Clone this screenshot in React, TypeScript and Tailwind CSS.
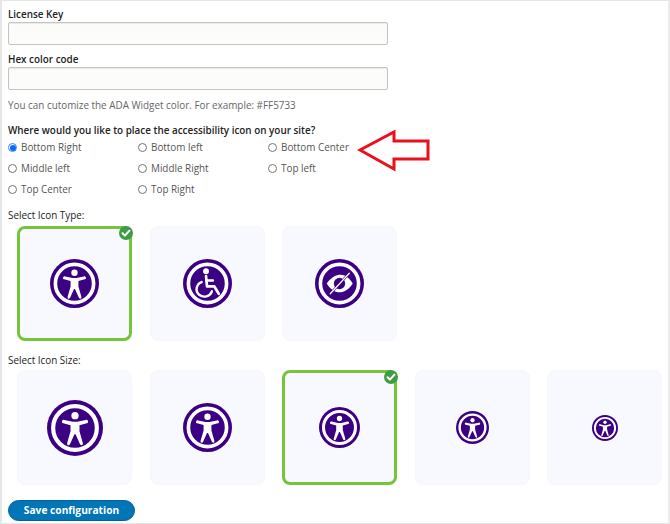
const PURPLE = "#3c0082";

function Ring({ size, children }: { size: number; children: React.ReactNode }) {
  return (
    <svg width={size} height={size} viewBox="0 0 100 100">
      <circle cx="50" cy="50" r="50" fill={PURPLE} />
      <circle cx="50" cy="50" r="39" fill={PURPLE} stroke="#fff" strokeWidth="7.500" />
      {children}
    </svg>
  );
}

function BodyIcon({ size }: { size: number }) {
  return (
    <Ring size={size}>
      <circle cx="50" cy="28" r="6.500" fill="#fff" />
      <path
        d="M27 37 C26 39.500 27 41 29 41.500 L42 45 L42 56 L36 77 C35 81 39 82.500 41 79 L49 61 L51 61 L59 79 C61 82.500 65 81 64 77 L58 56 L58 45 L71 41.500 C73 41 74 39.500 73 37 C72 35 71 35 69 35.500 L54 39 L46 39 L31 35.500 C29 35 28 35 27 37 Z"
        fill="#fff"
      />
    </Ring>
  );
}

function WheelchairIcon({ size }: { size: number }) {
  return (
    <Ring size={size}>
      <circle cx="47" cy="25" r="6" fill="#fff" />
      <path
        d="M47 35 L49 56 L64 56 L73 71"
        fill="none"
        stroke="#fff"
        strokeWidth="5.500"
        strokeLinecap="round"
        strokeLinejoin="round"
      />
      <path d="M48 44 L61 44" stroke="#fff" strokeWidth="5" strokeLinecap="round" />
      <path
        d="M38 47 C27 51 24 66 33 73 C42 80 55 77 59 66"
        fill="none"
        stroke="#fff"
        strokeWidth="5"
        strokeLinecap="round"
      />
    </Ring>
  );
}

function EyeOffIcon({ size }: { size: number }) {
  return (
    <Ring size={size}>
      <path
        d="M24 50 C33 37 43 32 52 32 C62 32 71 39 77 50 C70 61 60 68 50 68 C40 68 31 61 24 50 Z"
        fill="#fff"
      />
      <circle cx="50" cy="50" r="11.500" fill={PURPLE} />
      <path d="M31 71 L70 29" stroke={PURPLE} strokeWidth="5" />
      <path d="M31 71 L70 29" stroke="#fff" strokeWidth="2.500" strokeLinecap="round" />
    </Ring>
  );
}

function Tile({ selected, children }: { selected?: boolean; children: React.ReactNode }) {
  return (
    <div
      className={
        selected
          ? "relative flex h-[115px] w-[115px] items-center justify-center rounded-[8px] border-[3px] border-[#74c53c] bg-[#f8f9ff]"
          : "relative flex h-[115px] w-[115px] items-center justify-center rounded-[8px] border border-[#f6f7fc] bg-[#f8f9ff]"
      }
    >
      {children}
      {selected && (
        <svg className="absolute right-[-4px] top-[-3px]" width="14" height="14" viewBox="0 0 15 15">
          <circle cx="7.500" cy="7.500" r="7.500" fill="#3f9c43" />
          <path
            d="M3.800 7.800 L6.300 10.300 L11.200 5"
            fill="none"
            stroke="#fff"
            strokeWidth="2.200"
            strokeLinecap="round"
            strokeLinejoin="round"
          />
        </svg>
      )}
    </div>
  );
}

function Radio({ label, checked }: { label: string; checked?: boolean }) {
  return (
    <label className="flex h-[21px] items-center text-[#555]">
      <span
        className={
          checked
            ? "mr-[4px] flex h-[7px] w-[7px] box-content items-center justify-center rounded-full border border-[#3b82f6] bg-white"
            : "mr-[4px] flex h-[7px] w-[7px] box-content items-center justify-center rounded-full border border-[#767676] bg-white"
        }
      >
        {checked && <span className="h-[6px] w-[6px] shrink-0 rounded-full bg-[#0a6cf5]" />}
      </span>
      {label}
    </label>
  );
}

function Field({ label }: { label: string }) {
  return (
    <div>
      <div className="h-[15px] font-semibold leading-[15px] text-[#222]">{label}</div>
      <input className="block h-[23px] w-[380px] rounded-[2px] border border-[#c4c4c0] bg-[#fcfcfa] shadow-[inset_0_1px_1px_rgba(0,0,0,0.08)]" />
    </div>
  );
}

export default function App() {
  return (
    <div
      className="relative h-[524px] w-[670px] overflow-hidden border-x-2 border-y border-[#e6e6e6] border-r-[#ececec] bg-white pl-[6px] pt-[6px] text-[9.900px] text-[#222]"
      style={{ fontFamily: '"Open Sans", sans-serif' }}
    >
      <div className="flex flex-col gap-[7px]">
        <Field label="License Key" />
        <Field label="Hex color code" />
      </div>
      <p className="mt-[8px] h-[15px] leading-[15px] text-[#666]">
        You can cutomize the ADA Widget color. For example: #FF5733
      </p>

      <div className="mt-[10px] h-[14px] font-semibold leading-[14px]">
        Where would you like to place the accessibility icon on your site?
      </div>
      <div className="grid w-[390px] grid-cols-3">
        <Radio label="Bottom Right" checked />
        <Radio label="Bottom left" />
        <Radio label="Bottom Center" />
        <Radio label="Middle left" />
        <Radio label="Middle Right" />
        <Radio label="Top left" />
        <Radio label="Top Center" />
        <Radio label="Top Right" />
      </div>

      <div className="mt-[8px] h-[14px] leading-[14px]">Select Icon Type:</div>
      <div className="ml-[9px] mt-[4px] flex gap-[17.500px]">
        <Tile selected>
          <BodyIcon size={49} />
        </Tile>
        <Tile>
          <WheelchairIcon size={49} />
        </Tile>
        <Tile>
          <EyeOffIcon size={49} />
        </Tile>
      </div>

      <div className="mt-[12px] h-[14px] leading-[14px]">Select Icon Size:</div>
      <div className="ml-[9px] mt-[3px] flex gap-[17.500px]">
        <Tile>
          <BodyIcon size={56} />
        </Tile>
        <Tile>
          <BodyIcon size={49} />
        </Tile>
        <Tile selected>
          <BodyIcon size={41} />
        </Tile>
        <Tile>
          <BodyIcon size={33} />
        </Tile>
        <Tile>
          <BodyIcon size={26} />
        </Tile>
      </div>

      <button className="mt-[15px] flex h-[21px] w-[127px] items-center justify-center rounded-full border border-[#0a5f96] bg-[#0075b8] text-[10.200px] font-bold text-white">
        Save configuration
      </button>

      <svg className="absolute left-[355px] top-[128px]" width="74" height="44" viewBox="0 0 74 44">
        <path
          d="M3 21 L37 3 L37 12 L71 12 L71 30 L37 30 L37 40 Z"
          fill="#fff"
          stroke="#e8111c"
          strokeWidth="3"
        />
      </svg>
    </div>
  );
}
